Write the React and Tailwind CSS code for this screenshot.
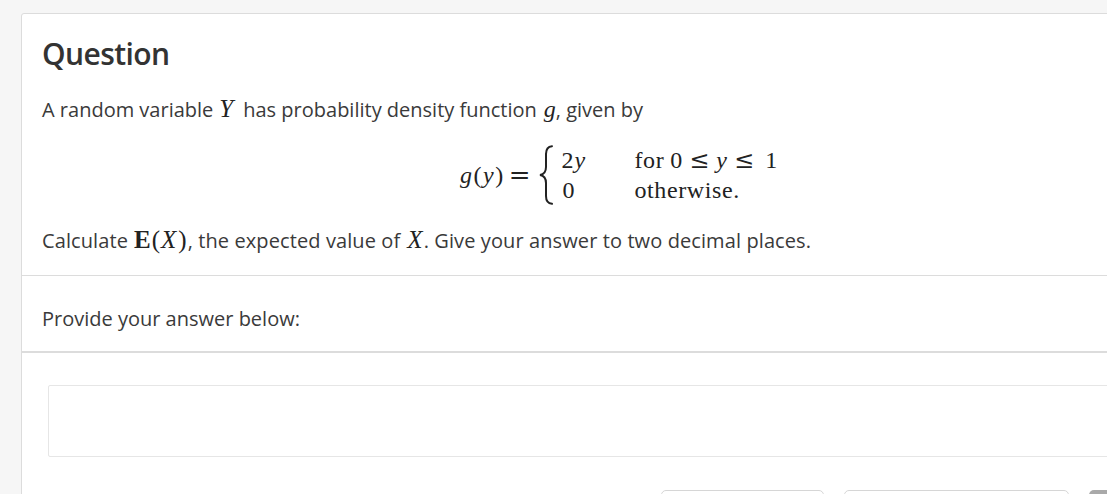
import React from "react";

const serif = { fontFamily: '"Liberation Serif", "Times New Roman", serif' };
const rel = { fontFamily: '"DejaVu Serif", "Liberation Serif", serif' };

function Brace() {
  return (
    <svg width="16" height="60" viewBox="0 0 16 60" className="block">
      <path
        d="M14 1.2 C9.5 1.6 8 4 8 9 L8 22 C8 27 6 29.3 2 30 C6 30.7 8 33 8 38 L8 51 C8 56 9.5 58.4 14 58.8"
        fill="none"
        stroke="#222"
        strokeWidth="2"
        strokeLinecap="round"
      />
    </svg>
  );
}

export default function App() {
  return (
    <div
      className="w-[1107px] h-[494px] overflow-hidden bg-[#f6f6f6] pt-[13px] pl-[21px] text-[#333]"
      style={{ fontFamily: '"Open Sans", "Noto Sans", sans-serif' }}
    >
      <div className="w-[1120px] h-[560px] bg-white border border-[#dcdcdc] rounded-tl-[3px]">
        <div className="px-5 pt-[22px] pb-[20px]">
          <h2 className="text-[30px] leading-[36px] font-semibold tracking-[-0.6px] text-[#333]">Question</h2>
          <p className="mt-[24px] text-[20px] leading-[28px] text-[#3a3a3a]">
            A random variable
            <span style={serif} className="inline-block italic text-[25px] leading-[20px] text-[#222] ml-[6px] mr-[9px] tracking-[1px]">Y</span>
            has probability density function
            <span style={serif} className="inline-block italic text-[24px] leading-[20px] text-[#222] ml-[7px]">g</span>, given by
          </p>

          <div className="mt-[21px] ml-[418px] flex items-center text-[24px] leading-[30px] text-[#222]" style={serif}>
            <span className="tracking-[1.5px]">
              <span className="italic">g</span>(<span className="italic">y</span>)
            </span>
            <span style={rel} className="ml-[4px] text-[26px]">=</span>
            <span className="ml-[8px]">
              <Brace />
            </span>
            <div className="ml-[7px] grid grid-cols-[73px_auto]">
              <span className="tracking-[1px]">
                2<span className="italic">y</span>
              </span>
              <span className="flex items-baseline">
                <span className="tracking-[0.6px]">for</span>
                <span className="ml-[6px]">0</span>
                <span style={rel} className="ml-[7px]">≤</span>
                <span className="italic ml-[7px]">y</span>
                <span style={rel} className="ml-[7px]">≤</span>
                <span className="ml-[11px]">1</span>
              </span>
              <span className="ml-[1px]">0</span>
              <span className="tracking-[0.6px]">otherwise.</span>
            </div>
          </div>

          <p className="mt-[22px] text-[20px] leading-[28px] text-[#3a3a3a] tracking-[0.1px]">
            Calculate
            <span style={serif} className="inline-block text-[25px] leading-[20px] text-[#222] ml-[6px] tracking-[1px]">
              <span className="font-bold">E</span>(<span className="italic tracking-[2px]">X</span>)
            </span>
            , the expected value of
            <span style={serif} className="inline-block italic text-[25px] leading-[20px] text-[#222] ml-[7px] mr-[1px]">X</span>. Give your answer to two decimal places.
          </p>
        </div>

        <div className="border-t border-[#dcdcdc] px-5 pt-[29px] pb-[18px]">
          <p className="text-[20px] leading-[28px] text-[#3a3a3a]">Provide your answer below:</p>
        </div>

        <div className="border-t-2 border-[#dcdcdc] pt-[32px] pl-[26px]">
          <div className="h-[72px] w-[1100px] border border-[#e6e6e6] rounded-[2px]"></div>
          <div className="mt-[33px] flex w-[1200px]">
            <div className="shrink-0 ml-[613px] w-[163px] h-[20px] border border-[#d6d6d6] rounded-t-[5px]"></div>
            <div className="shrink-0 ml-[20px] w-[225px] h-[20px] border border-[#d6d6d6] rounded-t-[5px]"></div>
            <div className="shrink-0 ml-[20px] w-[100px] h-[20px] bg-[#a9a9a9] rounded-t-[5px]"></div>
          </div>
        </div>
      </div>
    </div>
  );
}
